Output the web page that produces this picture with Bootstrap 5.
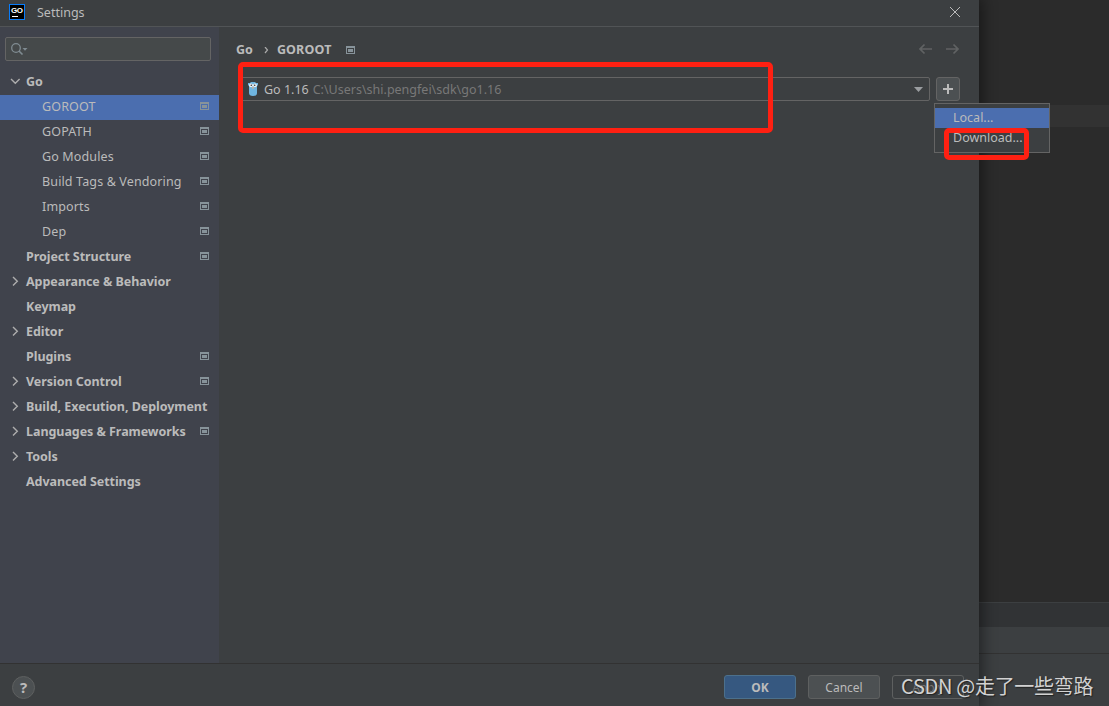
<!DOCTYPE html>
<html lang="en">
<head>
    <meta charset="UTF-8">
    <meta name="viewport" content="width=device-width, initial-scale=1.0">
    <title>Settings</title>
    <link href="https://cdn.jsdelivr.net/npm/bootstrap@5.3.0/dist/css/bootstrap.min.css" rel="stylesheet">
    <style>
        body {
            height: 706px;
            background-color: #2b2b2b;
            color: #bbbbbb;
            font-family: "Noto Sans", "Noto Sans CJK SC", sans-serif;
            font-size: 12.5px;
            line-height: 18px;
        }
        svg {
            display: block;
            flex-shrink: 0;
        }
        .dialog {
            width: 979px;
            background-color: #3c3f41;
            box-shadow: 0 0 14px 3px rgba(0,0,0,0.45);
            z-index: 2;
        }
        .title-bar {
            height: 27px;
            padding: 0 18px 2px 9px;
            border-bottom: 1px solid #515456;
        }
        .title-bar span {
            margin-left: 12px;
            padding-top: 2px;
        }
        .sidebar {
            width: 219px;
            background-color: #40434c;
        }
        .search-box {
            height: 24px;
            margin: 10px 8px 9px 5px;
            padding-left: 5px;
            background-color: #45494a;
            border: 1px solid #646464;
            border-radius: 2px;
        }
        .tree-row {
            height: 25px;
            padding: 0 10px 2px 10px;
            letter-spacing: -0.05px;
            white-space: nowrap;
        }
        .tree-row .arrow {
            width: 16px;
        }
        .tree-row .project-icon {
            margin-bottom: 2px;
        }
        .tree-row.child {
            padding-left: 42px;
            letter-spacing: 0.14px;
        }
        .tree-row.selected {
            background-color: #4b6eaf;
        }
        .crumbs {
            height: 22px;
            margin-top: 11px;
            padding: 0 20px 0 17px;
        }
        .crumbs span {
            padding-top: 2px;
        }
        .crumb-name {
            letter-spacing: 0.15px;
        }
        .crumb-icon {
            margin: 2px 0 0 14px;
        }
        .sdk-row {
            margin-top: 17px;
            padding: 0 19px 0 20px;
            gap: 6px;
        }
        .combo {
            height: 24px;
            padding: 0 6px 0 7px;
            border: 1px solid #646464;
            border-radius: 2px;
        }
        .combo span {
            padding-top: 2px;
        }
        .sdk-name {
            margin: 0 4px 0 5px;
        }
        .path {
            color: #787878;
        }
        .add-btn {
            width: 24px;
            height: 24px;
            background-color: #4c5052;
            border: 1px solid #646464;
            border-radius: 3px;
        }
        .footer-bar {
            height: 43px;
            padding: 4px 15px 0 12px;
            border-top: 1px solid #323232;
        }
        .help {
            width: 23px;
            height: 23px;
            background-color: #4c5052;
            border: 1px solid #5e6060;
            font-size: 15px;
        }
        .dlg-btn {
            width: 72px;
            height: 24px;
            padding-top: 2px;
            background-color: #4c5052;
            border: 1px solid #5e6060;
            border-radius: 3px;
            font-size: 12px;
        }
        .dlg-btn.ok {
            background-color: #365880;
            border-color: #4c708c;
        }
        .dlg-btn.off {
            background-color: transparent;
            color: #777777;
        }
        .caret-line {
            height: 22px;
            margin-top: 105px;
            background-color: #323232;
        }
        .tabs-strip {
            height: 25px;
            background-color: #313335;
            border-top: 1px solid #3c3f41;
        }
        .tool-strip {
            height: 27px;
            background-color: #3c3f41;
            border-bottom: 1px solid #323232;
        }
        .status-strip {
            height: 52px;
            background-color: #3c3f41;
        }
        .popup {
            left: 934px;
            top: 103px;
            width: 116px;
            height: 50px;
            padding: 4px 0;
            background-color: #3c3f41;
            border: 1px solid #646464;
            z-index: 3;
        }
        .popup div {
            height: 20px;
            padding: 1px 0 0 18px;
        }
        .popup .selected {
            background-color: #4b6eaf;
        }
        .marker {
            border: 5px solid #ff2012;
            border-radius: 5px;
            z-index: 4;
        }
        .marker-sdk {
            left: 238px;
            top: 62px;
            width: 535px;
            height: 71px;
        }
        .marker-download {
            left: 944px;
            top: 128px;
            width: 85px;
            height: 32px;
        }
        .watermark {
            left: 901px;
            top: 672px;
            color: #d2d2d2;
            font-family: "Noto Sans CJK SC", sans-serif;
            font-size: 20px;
            letter-spacing: -0.3px;
            line-height: 28px;
            text-shadow: 1px 1px 1px #222;
            white-space: nowrap;
            z-index: 5;
        }
    </style>
</head>
<body class="d-flex overflow-hidden position-relative">
    <div class="dialog d-flex flex-column flex-shrink-0 position-relative">
        <div class="title-bar d-flex align-items-center">
            <svg width="16" height="16" viewBox="0 0 16 16">
                <rect x=".5" y=".5" width="15" height="15" fill="#000" stroke="#087cfa"/>
                <text x="2" y="8.6" font-family="Liberation Sans" font-size="8" font-weight="bold" fill="#fff" textLength="12">GO</text>
                <rect x="3" y="12" width="6" height="1" fill="#fff"/>
            </svg>
            <span class="me-auto">Settings</span>
            <svg width="12" height="12" viewBox="0 0 12 12" stroke="#bbb"><path d="M1 1l10 10M11 1L1 11"/></svg>
        </div>

        <div class="d-flex flex-grow-1">
            <div class="sidebar">
                <div class="search-box d-flex align-items-center">
                    <svg width="17" height="12" viewBox="0 0 17 12" fill="none" stroke="#7f8b91">
                        <circle cx="5" cy="5" r="4.3" stroke-width="1.3"/>
                        <path d="M8 8l3.5 3.5" stroke-width="1.6"/>
                        <path d="M11.5 5h5l-2.5 2.7z" fill="#7f8b91" stroke="none"/>
                    </svg>
                </div>
                <div id="settingsTree"></div>
            </div>

            <div class="flex-grow-1">
                <div class="crumbs d-flex align-items-center fw-bold">
                    <span>Go</span>
                    <svg class="ms-2 me-2 mt-1" width="8" height="8" viewBox="0 0 8 8" fill="none" stroke="#aaa"><path d="M4 0l2.500 3L4 6" stroke-width="1.2"/></svg>
                    <span class="crumb-name">GOROOT</span>
                    <svg class="crumb-icon" width="9" height="8" viewBox="0 0 9 8"><path d="M0 0h9v8H0zM1 2v5h7V2z" fill="#87939a" fill-rule="evenodd"/><path d="M2 3h5v3H2z" fill="#87939a"/></svg>
                    <svg class="ms-auto" width="40" height="12" viewBox="0 0 40 12" fill="none" stroke="#606263" stroke-width="1.7">
                        <path d="M13 6H1M5.500 1.500L1 6l4.500 4.500M27 6h12M34.500 1.500L39 6l-4.500 4.500"/>
                    </svg>
                </div>
                <div class="sdk-row d-flex">
                    <div class="combo d-flex align-items-center flex-grow-1">
                        <svg width="12" height="16" viewBox="0 0 12 16">
                            <path d="M1 2h2l1-1h4l1 1h2v2l-1 1v7q0 3-4 3t-4-3V5L1 4z" fill="#6fb5e0"/>
                            <circle cx="4" cy="4.300" r="1.900" fill="#f2f2f2"/>
                            <circle cx="8" cy="4.300" r="1.900" fill="#f2f2f2"/>
                            <circle cx="4.300" cy="4.300" r=".8" fill="#333"/>
                            <circle cx="7.700" cy="4.300" r=".8" fill="#333"/>
                            <path d="M5 6h2v1.500H5z" fill="#c9b29b"/>
                        </svg>
                        <span class="sdk-name">Go 1.16</span>
                        <span class="path">C:\Users\shi.pengfei\sdk\go1.16</span>
                        <svg class="ms-auto" width="9" height="5" viewBox="0 0 9 5"><path d="M0 0h9L4.500 5z" fill="#9a9da0"/></svg>
                    </div>
                    <div class="add-btn d-flex align-items-center justify-content-center">
                        <svg width="10" height="10" viewBox="0 0 10 10"><path d="M4 0h2v4h4v2H6v4H4V6H0V4h4z" fill="#bbb"/></svg>
                    </div>
                </div>
            </div>
        </div>

        <div class="footer-bar d-flex align-items-center">
            <div class="help rounded-circle d-flex align-items-center justify-content-center fw-bold me-auto">?</div>
            <div class="d-flex" style="gap: 12px">
                <div class="dlg-btn ok d-flex align-items-center justify-content-center fw-bold">OK</div>
                <div class="dlg-btn d-flex align-items-center justify-content-center">Cancel</div>
                <div class="dlg-btn off d-flex align-items-center justify-content-center">Apply</div>
            </div>
        </div>
    </div>

    <!-- Editor window behind the dialog -->
    <div class="flex-grow-1 d-flex flex-column">
        <div class="caret-line"></div>
        <div class="tabs-strip mt-auto"></div>
        <div class="tool-strip"></div>
        <div class="status-strip"></div>
    </div>

    <div class="popup position-absolute">
        <div class="selected">Local...</div>
        <div>Download...</div>
    </div>
    <div class="marker marker-sdk position-absolute"></div>
    <div class="marker marker-download position-absolute"></div>
    <div class="watermark position-absolute">CSDN @走了一些弯路</div>

    <script src="https://cdn.jsdelivr.net/npm/bootstrap@5.3.0/dist/js/bootstrap.bundle.min.js"></script>
    <script>
        // Settings tree
        const treeItems = [
            { name: 'Go', arrow: 'down' },
            { name: 'GOROOT', child: true, project: true, selected: true },
            { name: 'GOPATH', child: true, project: true },
            { name: 'Go Modules', child: true, project: true },
            { name: 'Build Tags &amp; Vendoring', child: true, project: true },
            { name: 'Imports', child: true, project: true },
            { name: 'Dep', child: true, project: true },
            { name: 'Project Structure', project: true },
            { name: 'Appearance &amp; Behavior', arrow: 'right' },
            { name: 'Keymap' },
            { name: 'Editor', arrow: 'right' },
            { name: 'Plugins', project: true },
            { name: 'Version Control', arrow: 'right', project: true },
            { name: 'Build, Execution, Deployment', arrow: 'right' },
            { name: 'Languages &amp; Frameworks', arrow: 'right', project: true },
            { name: 'Tools', arrow: 'right' },
            { name: 'Advanced Settings' }
        ];

        const arrowPaths = {
            down: 'M1 3l4.300 4.300L9.600 3',
            right: 'M3 1l4.300 4.300L3 9.600'
        };

        document.getElementById('settingsTree').innerHTML = treeItems.map(item => `
            <div class="tree-row d-flex align-items-center ${item.child ? 'child' : 'fw-bold'} ${item.selected ? 'selected' : ''}">
                ${item.child ? '' : `<span class="arrow flex-shrink-0">${item.arrow ? `<svg width="11" height="11" viewBox="0 0 11 11" fill="none" stroke="#adadad" stroke-width="1.4"><path d="${arrowPaths[item.arrow]}"/></svg>` : ''}</span>`}
                <span>${item.name}</span>
                ${item.project ? '<svg class="project-icon ms-auto" width="9" height="8" viewBox="0 0 9 8"><path d="M0 0h9v8H0zM1 2v5h7V2z" fill="#87939a" fill-rule="evenodd"/><path d="M2 3h5v3H2z" fill="#87939a"/></svg>' : ''}
            </div>
        `).join('');
    </script>
</body>
</html>
